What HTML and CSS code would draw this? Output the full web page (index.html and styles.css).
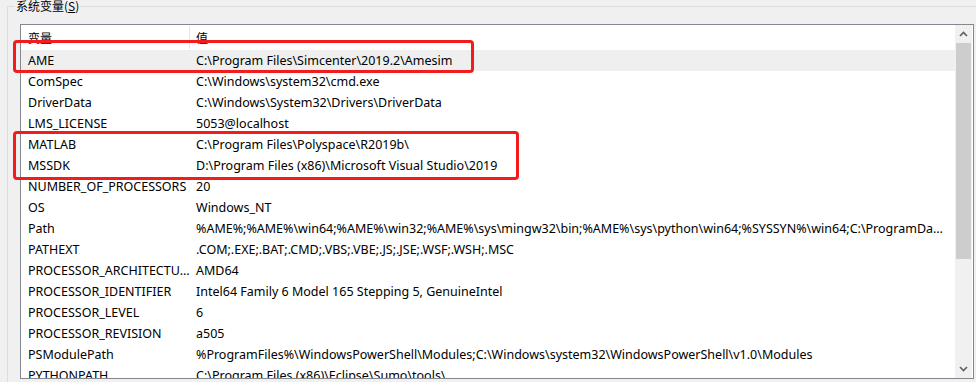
FILE: index.html
```html
<!DOCTYPE html>
<html lang="zh-CN">
<head>
    <meta charset="UTF-8">
    <title>系统变量</title>
    <link rel="stylesheet" href="styles.css">
</head>
<body>

    <fieldset class="group">
        <legend><span>系统变量(<u>S</u>)</span></legend>

        <div class="listview">
            <div class="list-body">
                <div class="list-head">
                    <div class="cell name">变量</div>
                    <div class="cell value">值</div>
                </div>
                <div class="row hover">
                    <div class="cell name">AME</div>
                    <div class="cell value">C:\Program Files\Simcenter\2019.2\Amesim</div>
                </div>
                <div class="row">
                    <div class="cell name">ComSpec</div>
                    <div class="cell value">C:\Windows\system32\cmd.exe</div>
                </div>
                <div class="row">
                    <div class="cell name">DriverData</div>
                    <div class="cell value">C:\Windows\System32\Drivers\DriverData</div>
                </div>
                <div class="row">
                    <div class="cell name">LMS_LICENSE</div>
                    <div class="cell value">5053@localhost</div>
                </div>
                <div class="row">
                    <div class="cell name">MATLAB</div>
                    <div class="cell value">C:\Program Files\Polyspace\R2019b\</div>
                </div>
                <div class="row">
                    <div class="cell name">MSSDK</div>
                    <div class="cell value">D:\Program Files (x86)\Microsoft Visual Studio\2019</div>
                </div>
                <div class="row">
                    <div class="cell name">NUMBER_OF_PROCESSORS</div>
                    <div class="cell value">20</div>
                </div>
                <div class="row">
                    <div class="cell name">OS</div>
                    <div class="cell value">Windows_NT</div>
                </div>
                <div class="row">
                    <div class="cell name">Path</div>
                    <div class="cell value">%AME%;%AME%\win64;%AME%\win32;%AME%\sys\mingw32\bin;%AME%\sys\python\win64;%SYSSYN%\win64;C:\ProgramData\Oracle\Java\javapath</div>
                </div>
                <div class="row">
                    <div class="cell name">PATHEXT</div>
                    <div class="cell value">.COM;.EXE;.BAT;.CMD;.VBS;.VBE;.JS;.JSE;.WSF;.WSH;.MSC</div>
                </div>
                <div class="row">
                    <div class="cell name">PROCESSOR_ARCHITECTURE</div>
                    <div class="cell value">AMD64</div>
                </div>
                <div class="row">
                    <div class="cell name">PROCESSOR_IDENTIFIER</div>
                    <div class="cell value">Intel64 Family 6 Model 165 Stepping 5, GenuineIntel</div>
                </div>
                <div class="row">
                    <div class="cell name">PROCESSOR_LEVEL</div>
                    <div class="cell value">6</div>
                </div>
                <div class="row">
                    <div class="cell name">PROCESSOR_REVISION</div>
                    <div class="cell value">a505</div>
                </div>
                <div class="row">
                    <div class="cell name">PSModulePath</div>
                    <div class="cell value">%ProgramFiles%\WindowsPowerShell\Modules;C:\Windows\system32\WindowsPowerShell\v1.0\Modules</div>
                </div>
                <div class="row">
                    <div class="cell name">PYTHONPATH</div>
                    <div class="cell value">C:\Program Files (x86)\Eclipse\Sumo\tools\</div>
                </div>
            </div>

            <div class="scrollbar">
                <div class="arrow">
                    <svg width="9" height="6" viewBox="0 0 9 6"><path d="M1 5 L4.5 1.5 L8 5" fill="none" stroke="#606060" stroke-width="1.6"/></svg>
                </div>
                <div class="track">
                    <div class="thumb"></div>
                </div>
                <div class="arrow">
                    <svg width="9" height="6" viewBox="0 0 9 6"><path d="M1 1 L4.5 4.5 L8 1" fill="none" stroke="#606060" stroke-width="1.6"/></svg>
                </div>
            </div>
        </div>
    </fieldset>

    <!-- 红框标注 -->
    <div class="mark mark-ame"></div>
    <div class="mark mark-matlab"></div>

</body>
</html>
```

FILE: styles.css
```css
body {
    margin: 0;
    background-color: #f0f0f0;
    font-family: "Noto Sans", "Noto Sans CJK SC", sans-serif;
    font-size: 12.5px;
    color: #000;
    width: 976px;
    height: 382px;
    overflow: hidden;
    position: relative;
}
.group {
    margin: -1px 0 0 7px;
    padding: 11px 0 0 12px;
    width: 1000px;
    border: 1px solid #dcdcdc;
    height: 420px;
    box-sizing: border-box;
}
.group legend {
    padding: 0 1px;
    margin-left: -5px;
    line-height: 14px;
    font-family: "Noto Sans CJK SC", sans-serif;
    font-size: 12px;
}
.group legend u {
    text-underline-offset: 1px;
}
.listview {
    width: 954px;
    height: 355px;
    border: 1px solid #828790;
    background-color: #fff;
    box-sizing: border-box;
    display: flex;
    overflow: hidden;
}
.list-body {
    flex: 1;
    min-width: 0;
}
.list-head,
.row {
    display: grid;
    grid-template-columns: 169px 1fr;
}
.list-head {
    height: 25px;
    align-items: center;
    font-family: "Noto Sans CJK SC", sans-serif;
    font-size: 12px;
}
.list-head .name {
    border-right: 1px solid #e5e5e5;
    height: 23px;
    line-height: 23px;
}
.row {
    height: 21px;
    line-height: 21px;
}
.row.hover {
    background-color: #efefef;
}
.cell {
    white-space: nowrap;
    overflow: hidden;
    text-overflow: ellipsis;
}
.cell.name {
    padding-left: 7px;
}
.cell.value {
    padding: 0 8px 0 6px;
}
.scrollbar {
    width: 17px;
    flex: none;
    background-color: #f0f0f0;
    display: flex;
    flex-direction: column;
    margin-right: 1px;
}
.arrow {
    height: 18px;
    display: flex;
    align-items: center;
    justify-content: center;
    flex: none;
}
.track {
    flex: 1;
}
.thumb {
    height: 216px;
    background-color: #cdcdcd;
    margin: 0 1px;
}
.mark {
    position: absolute;
    border: 3px solid #f21c1c;
    border-radius: 4px;
    box-sizing: border-box;
}
.mark-ame {
    left: 13px;
    top: 40px;
    width: 461px;
    height: 33px;
}
.mark-matlab {
    left: 13px;
    top: 131px;
    width: 506px;
    height: 49px;
}
```
